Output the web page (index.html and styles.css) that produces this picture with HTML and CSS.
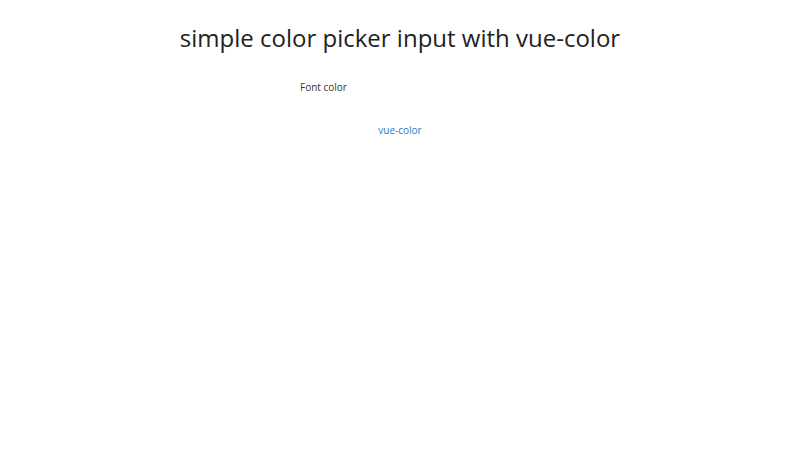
FILE: index.html
```html
<!DOCTYPE html>
<html>
<head>
<meta charset="utf-8">
<link rel="stylesheet" href="styles.css">
</head>
<body>
<div class="app">
  <h1 class="title">simple color picker input with vue-color</h1>
  <div class="form">
    <label class="label">Font color</label>
  </div>
  <p class="credit"><a class="link" href="#">vue-color</a></p>
</div>
</body>
</html>
```
FILE: styles.css
```css
html, body {
  margin: 0;
  padding: 0;
  background: #fff;
}
body {
  font-family: "Open Sans", "Noto Sans", sans-serif;
  color: #212529;
}
.app {
  display: flex;
  flex-direction: column;
  align-items: center;
}
.title {
  margin: 20px 0 0;
  font-size: 24px;
  font-weight: 400;
  line-height: 36px;
  color: #222;
}
.form {
  width: 200px;
  margin-top: 18px;
}
.label {
  font-size: 10px;
  line-height: 16px;
  color: #333;
}
.credit {
  margin: 26px 0 0;
  font-size: 10px;
  line-height: 16px;
}
.link {
  color: #2a7bbd;
  text-decoration: none;
}
```
